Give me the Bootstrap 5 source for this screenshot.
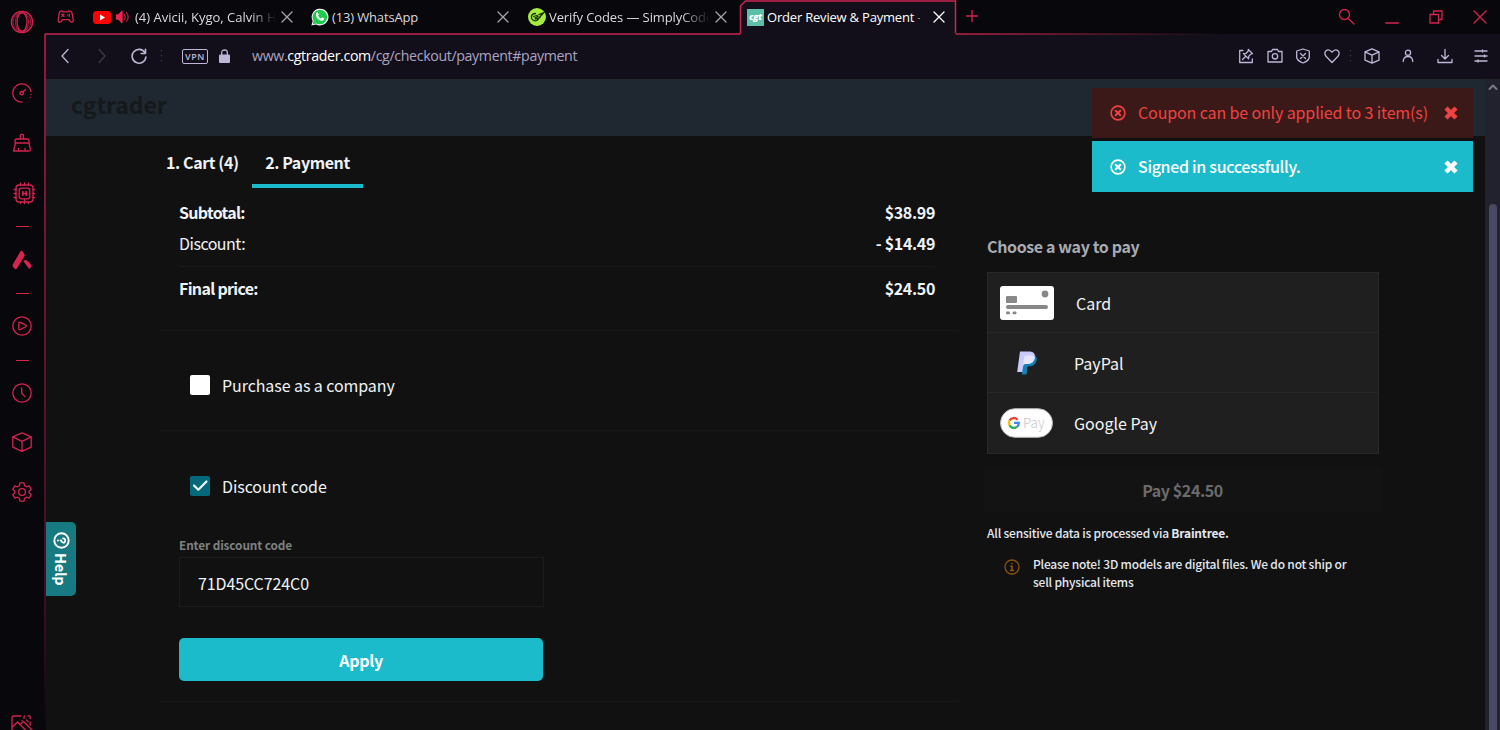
<!DOCTYPE html>
<html lang="en" data-bs-theme="dark">
<head>
<meta charset="utf-8">
<title>Order Review &amp; Payment - CGTrader</title>
<link href="https://cdn.jsdelivr.net/npm/bootstrap@5.3.0/dist/css/bootstrap.min.css" rel="stylesheet">
<style>
  :root { --gx: #d4244f; --teal: #1cbbcb; --lilac: #bdb6d6; }
  body { width: 1500px; height: 730px; background: #111; color: #eef3f6; font-family: "Noto Sans CJK SC", sans-serif; font-size: 16px; line-height: 24px; }
  svg { display: block; flex: none; }
  .ln { fill: none; stroke: currentColor; stroke-width: 1.3; stroke-linecap: round; stroke-linejoin: round; }
  /* browser chrome */
  .chrome-font { font-family: "Open Sans", sans-serif; font-size: 13px; line-height: 18px; }
  .rail { width: 46px; flex: none; background: #07070c; color: var(--gx); }
  .rail > div { width: 44px; display: flex; align-items: center; justify-content: center; flex: none; }
  .h44 { height: 44px; } .h48 { height: 48px; } .h50 { height: 50px; } .h52 { height: 52px; } .h16 { height: 16px; } .h14 { height: 14px; }
  .dash::before { content: ""; width: 13px; height: 1px; background: var(--gx); }
  .tabstrip { height: 34px; flex: none; background: #07070c; color: #d9d9de; }
  .pad-icon { margin: 0 15px 0 8px; color: var(--gx); }
  .tab-item { height: 34px; }
  .tab-label { overflow: hidden; white-space: nowrap; }
  .fade-end { -webkit-mask-image: linear-gradient(90deg, #000 82%, transparent); mask-image: linear-gradient(90deg, #000 82%, transparent); }
  .tab-live { width: 216px; padding-left: 7px; background: #120f1a; color: #fff; }
  .w-a { width: 218px; } .w-b { width: 217px; } .w-c { width: 212px; }
  .w1 { width: 141px; } .w2 { width: 150px; letter-spacing: -.15px; } .w3 { width: 161px; letter-spacing: -.1px; } .w4 { width: 153px; letter-spacing: -.2px; }
  .x-ic { margin-left: 5px; color: #a5a5ad; } .w2 + .x-ic { margin-left: 15px; } .w3 + .x-ic { margin-left: 5px; } .w4 + .x-ic { margin-left: 13px; color: #fff; }
  .winctl { padding: 0 13px 0 9px; color: var(--gx); } .g2 { margin-left: 30px; }
  .cgt { width: 17px; height: 17px; background: #5cbfa8; color: #fff; font: italic 800 9px/15px "Open Sans", sans-serif; text-align: center; flex: none; letter-spacing: -.3px; }
  .addr { height: 44px; flex: none; background: #120f1a; color: var(--lilac); }
  .vpn { width: 26px; height: 15px; border: 1.3px solid var(--lilac); border-radius: 2px; font-size: 9px; line-height: 13px; letter-spacing: .6px; text-align: center; font-weight: 600; }
  .url { font-size: 14.2px; color: #aba4c4; letter-spacing: -.36px; }
  .url b { font-weight: 400; color: #fff; }
  .tools { gap: 12.5px; padding-right: 11px; } .tools .dots { margin-left: -3px; } .tools .dots + svg { margin-left: -1px; } .tools .dots + svg ~ svg { margin-left: 8px; }
  .outline { inset: 0; pointer-events: none; z-index: 5; }
  /* page */
  .site-head { height: 57px; background: #1f2831; }
  .logo-word { font-size: 23px; line-height: 51px; font-weight: 700; color: #15191c; padding-left: 25px; letter-spacing: -.1px; }
  .scroll { width: 15px; background: #22222f; }
  .thumb { width: 8px; height: 526px; background: #474a62; border-radius: 4px 4px 0 0; margin: 125px 0 0 4px; }
  .checkout { width: 800px; margin-left: 113px; }
  .steps { height: 52px; font-weight: 700; letter-spacing: -.4px; }
  .step { height: 52px; line-height: 52px; }
  .s1 { padding-left: 7px; width: 93px; white-space: nowrap; }
  .step-on { border-bottom: 4px solid var(--teal); width: 111px; text-align: center; }
  .rule { height: 1px; background: #181818; }
  .sum { margin: 0 24px 0 20px; }
  .lbl-b { letter-spacing: -.7px; } .lbl-r { letter-spacing: -.5px; } .amt { letter-spacing: -.35px; }
  .tick { width: 20px; height: 20px; border-radius: 2px; background: #fff; }
  .tick-on { background: #04697b; }
  .opt { padding-left: 31px; gap: 12px; letter-spacing: -.08px; }
  .code-label { font-size: 11.8px; line-height: 18px; font-weight: 700; color: #7d8182; letter-spacing: -.1px; }
  .code-box { width: 365px; height: 50px; border: 1px solid #1c1c1c; padding: 0 18px; line-height: 50px; letter-spacing: -.1px; }
  .apply { width: 364px; height: 43px; background: var(--teal); color: #fff; border-radius: 5px; font-weight: 700; letter-spacing: -.3px; }
  .paycol { width: 392px; margin-left: 28px; padding-top: 98px; }
  .pay-title { color: #a7abb3; letter-spacing: -.37px; }
  .ways { border: 1px solid #282828; background: #1f1f1f; height: 182px; }
  .way { height: 60px; border-bottom: 1px solid #272727; color: #f4f4f4; padding-left: 12px; }
  .way:last-child { border: 0; }
  .way .pic { width: 54px; display: flex; justify-content: center; }
  .paybtn { height: 44px; margin: 15px -2px 0 -3px; background: #131313; color: #6b6b6e; line-height: 42px; font-weight: 700; text-align: center; letter-spacing: -.4px; }
  .fine { font-size: 12px; line-height: 18px; font-weight: 500; color: #e2e8f0; white-space: nowrap; letter-spacing: -.2px; }
  .toasts { left: 1092px; top: 88px; width: 381px; z-index: 6; }
  .note { height: 50px; padding: 0 15px 0 18px; }
  .note span { margin: -2px 0 0 12px; letter-spacing: -.13px; }
  .note-bad { background: #3c1919; color: #ee4340; }
  .note-ok { background: var(--teal); color: #fff; height: 51px; margin-top: 3px; }
  .note-ok span { font-weight: 500; letter-spacing: -.32px; }
  .help { left: 46px; top: 522px; width: 30px; height: 74px; background: #177a82; color: #fff; border-radius: 0 5px 5px 0; z-index: 6; writing-mode: vertical-rl; font-weight: 700; font-size: 14.5px; line-height: 30px; padding-top: 10px; letter-spacing: -.2px; }
</style>
</head>
<body class="d-flex overflow-hidden position-relative">

<aside class="rail d-flex flex-column chrome-font">
  <div class="h44"><svg width="24" height="24" viewBox="0 0 24 24" class="ln"><circle cx="12" cy="12" r="10.6"/><circle cx="12" cy="12" r="9" stroke-width=".7"/><ellipse cx="12" cy="12" rx="5" ry="9.3"/><ellipse cx="12" cy="12" rx="6.6" ry="10.2" stroke-width=".7"/></svg></div>
  <div class="h50 mt-4"><svg width="20" height="20" viewBox="0 0 20 20" class="ln"><path d="M10 19.200A9.200 9.200 0 1 1 19 8.600M13.500 6.500L10.800 9"/><circle cx="9.700" cy="10.200" r="1.700"/><path d="M19 11.500v.1M18.300 14.500v.1"/></svg></div>
  <div class="h50"><svg width="20" height="20" viewBox="0 0 20 20" class="ln"><path d="M8.300 6V2.300q0-1 1-1h1.200q1 0 1 1V6M3 10V7.500Q3 6 4.500 6h11Q17 6 17 7.500V10zM3.500 10L1.500 18h15.500q1.400 0 1.400-1.500L17 10M6.500 18v-2.500M13 18v-2.500"/></svg></div>
  <div class="h50 ps-1"><svg width="22" height="22" viewBox="0 0 22 22" class="ln"><rect x="3" y="3" width="17" height="17" rx="3"/><rect x="6.200" y="6.200" width="10.600" height="10.600" rx="2.500"/><path d="M9.800 9.500v4M13.200 9.500v4M9.800 11.500h3.400" stroke-width="1.600"/><path d="M7.500 1v2M11.500 1v2M15.500 1v2M7.500 20v1.500M11.500 17v4.500M15.500 20v1.500M1 7.500h2M1 11.500h2M1 15.500h2M20 7.500h1.500M20 11.500h1.500M20 15.500h1.500"/></svg></div>
  <div class="h16 dash"></div>
  <div class="h52"><svg width="20" height="20" viewBox="0 0 20 20" fill="currentColor"><path d="M8.300 1.500Q9.500-.3 11 1.800l1.400 2.400q.6 1.200-.2 2.300L5 18.500Q3.800 20 2.400 18.500l-1.500-1.800Q.2 15.500.9 14.200zM11.200 11Q14 8.700 16.300 11.500l2.900 3.500q.9 1.400-.5 2.600l-1.500 1.300z"/></svg></div>
  <div class="h14 dash"></div>
  <div class="h52"><svg width="20" height="20" viewBox="0 0 20 20" class="ln"><circle cx="10" cy="10" r="9.200"/><path d="M6.800 7.400q0-1.500 1.500-1l5.300 2.500q1.600.9 0 1.900l-5.300 2.800q-1.500.5-1.500-1z"/></svg></div>
  <div class="h16 dash"></div>
  <div class="h50"><svg width="20" height="20" viewBox="0 0 20 20" class="ln"><circle cx="10" cy="10" r="9.200"/><path d="M9.700 5v5.300l3.300 3.300"/></svg></div>
  <div class="h48"><svg width="20" height="20" viewBox="0 0 20 20" class="ln"><path d="M10 .8l9.200 4v10.400L10 19.400.8 15.200V4.800zM.8 4.800L10 9.300l9.200-4.500M10 9.300v10"/></svg></div>
  <div class="h52"><svg width="20" height="20" viewBox="0 0 20 20" class="ln"><circle cx="10" cy="10" r="3.400"/><path d="M8 .9h4l.6 2.800 1.900 1.100 2.700-.9 2 3.500-2.100 1.900v1.400l2.100 1.900-2 3.500-2.700-.9-1.900 1.100-.6 2.800H8l-.6-2.800-1.900-1.100-2.700.9-2-3.500 2.100-1.900V9.300L.8 7.400l2-3.500 2.700.9 1.900-1.100z"/></svg></div>
  <div class="mt-auto"><svg width="22" height="15" viewBox="0 0 22 15" class="ln"><path d="M1 15V3Q1 1 3 1h7M1.500 12l5-5 8 8M9 9.500l3.500-3 8.500 8.500M13.500 1v.1M17 1h1.500q.7 0 .7 1v1.500M13 3.500v-2M11 5.500h.1M15.500 5l1.500 1.500M19.200 7v3"/></svg></div>
</aside>

<main class="d-flex flex-column flex-grow-1">
  <header class="tabstrip d-flex chrome-font">
    <div class="d-flex align-items-center"><svg class="ln pad-icon" width="24" height="16" viewBox="0 0 24 16"><path d="M7 2.200q1-.7 2 .6h5q1-1.300 2-.6 1.700.3 2 1.800l1.200 6.500q.3 3-1.800 2.700-1.300-.2-2.500-2.600H8.500q-1.200 2.400-2.500 2.600-2.100.4-1.800-2.200L5.200 4q.3-1.500 1.800-1.800zM7.800 5.200l2 2M9.800 5.200l-2 2M13.500 6.200h.1M15.300 5v2.400"/></svg></div>
    <div class="tab-item w-a d-flex align-items-center">
      <svg width="18" height="13" viewBox="0 0 18 13"><rect width="18" height="13" rx="3.500" fill="#f00"/><path d="M7 3.600v5.800l5-2.900z" fill="#fff"/></svg>
      <svg class="ms-1 ln" width="16" height="14" viewBox="0 0 16 14" style="color:#f0264e"><path d="M1.500 5h2l3.500-3.500v11L3.500 9h-2z" fill="currentColor"/><path d="M9.500 4.500q1.800 2.500 0 5M11.500 2.500q3.600 4.500 0 9" stroke-width="1"/></svg>
      <span class="tab-label fade-end w1 ms-1">(4) Avicii, Kygo, Calvin H</span>
      <svg class="ln x-ic" width="12" height="12" viewBox="0 0 12 12"><path d="M1 1l10 10M11 1L1 11"/></svg>
    </div>
    <div class="tab-item w-b d-flex align-items-center">
      <svg width="18" height="18" viewBox="0 0 18 18"><path d="M.4 17.600l1.300-4.500A8.400 8.400 0 1 1 5 16.400z" fill="#fff"/><path d="M1.600 16.400l1-3.500a7.300 7.300 0 1 1 2.600 2.500z" fill="#1fca4f"/><path d="M5.500 4.700q.7-.8 1.500.1l.8 1.700-.7 1.200q1 1.900 3 2.800l1.100-1q.8.200 2 1-.1 2-2 2.300Q9 12.800 7 10.900T5 7.300Q4.600 5.800 5.500 4.700z" fill="#fff"/></svg>
      <span class="tab-label w2" style="margin-left:3px">(13) WhatsApp</span>
      <svg class="ln x-ic" width="12" height="12" viewBox="0 0 12 12"><path d="M1 1l10 10M11 1L1 11"/></svg>
    </div>
    <div class="tab-item w-c d-flex align-items-center">
      <svg width="18" height="18" viewBox="0 0 18 18"><circle cx="9" cy="9" r="9" fill="#a5ec3f"/><path class="ln" style="color:#17300b" d="M7.500 5.500L5 6Q2.500 8 4 11q1.500 2.500 5 1.500l4.500-5.500L16 4.500l-5 2.200M5.500 8.500l3.500-1 1 1-3 1.500 1 1 4-1.500"/></svg>
      <span class="tab-label fade-end w3" style="margin-left:3px">Verify Codes — SimplyCode</span>
      <svg class="ln x-ic" width="12" height="12" viewBox="0 0 12 12"><path d="M1 1l10 10M11 1L1 11"/></svg>
    </div>
    <div class="tab-item tab-live d-flex align-items-center">
      <span class="cgt">cgt</span>
      <span class="tab-label w4" style="margin-left:3px">Order Review &amp; Payment <span class="opacity-50">-</span></span>
      <svg class="ln x-ic" width="12" height="12" viewBox="0 0 12 12"><path d="M1 1l10 10M11 1L1 11"/></svg>
    </div>
    <div class="d-flex align-items-center flex-grow-1 winctl">
      <svg class="ln" width="14" height="14" viewBox="0 0 14 14"><path d="M1.500 6h11M7 .5v11"/></svg>
      <svg class="ln ms-auto" width="17" height="17" viewBox="0 0 17 17"><circle cx="6.500" cy="5.500" r="5"/><path d="M10.300 9.500l5.700 5.500"/></svg>
      <svg class="ln g2" width="14" height="14" viewBox="0 0 14 14"><path d="M.7 13h12.600"/></svg>
      <svg class="ln g2" width="14" height="14" viewBox="0 0 14 14"><path d="M1 4.500h8.500V13H1zM4.500 4.500V1H13v8.500H9.500"/></svg>
      <svg class="ln g2" width="14" height="14" viewBox="0 0 14 14"><path d="M1 1l12 12M13 1L1 13"/></svg>
    </div>
  </header>

  <nav class="addr d-flex align-items-center chrome-font">
    <svg class="ln" style="margin-left:14px" width="10" height="16" viewBox="0 0 10 16"><path d="M8 1.500L2 8l6 6.500"/></svg>
    <svg class="ln opacity-25" style="margin-left:27px" width="10" height="16" viewBox="0 0 10 16"><path d="M2 1.500L8 8l-6 6.500"/></svg>
    <svg class="ln" style="margin-left:24px" width="16" height="16" viewBox="0 0 16 16"><path d="M13.900 4.600A6.900 6.900 0 1 0 14.900 9M14.500 1.200v4.300h-4.300" stroke-width="1.600"/></svg>
    <svg class="opacity-25" style="margin-left:13px" width="3" height="12" viewBox="0 0 3 12" fill="currentColor"><path d="M.8 0h1.300v1.300H.8zM.8 5h1.300v1.300H.8zM.8 10h1.300v1.300H.8z"/></svg>
    <span class="vpn" style="margin-left:19px">VPN</span>
    <svg style="margin-left:11px" width="11" height="15" viewBox="0 0 11 15"><rect y="5.500" width="11" height="8.500" rx="1" fill="#bdb6d6"/><path class="ln" d="M2.700 6V3.500q0-2.500 2.800-2.500t2.800 2.500V6"/></svg>
    <span class="url" style="margin-left:22px">www.<b>cgtrader.com</b>/cg/checkout/payment#payment</span>
    <div class="ms-auto d-flex align-items-center tools">
      <svg class="ln" width="16" height="16" viewBox="0 0 16 16"><path d="M5 2.500H1.700v12h12.600v-3.500M4.500 11.500L7.500 8.500M10.300 1.500l4.200 4.200-1.700.4-2 2-.2 2.700L5.400 5.600l2.700-.3 2-2z"/></svg>
      <svg class="ln" width="16" height="16" viewBox="0 0 16 16"><path d="M1 14V3.500h3.500l1-2h5l1 2H15V14z"/><circle cx="8" cy="8.300" r="2.700"/></svg>
      <svg class="ln" width="16" height="16" viewBox="0 0 16 16"><path d="M8 1l6.300 2v6.500Q13.500 13 8 15 2.500 13 1.700 9.500V3zM5.500 5.500l5 5M10.500 5.500l-5 5"/></svg>
      <svg class="ln" width="16" height="16" viewBox="0 0 16 16"><path d="M8 14.500L2 8.300Q-.3 5 2 2.800 5 .5 8 4.200 11 .5 14 2.800q2.300 2.200 0 5.500z"/></svg>
      <svg class="opacity-25 dots" width="3" height="12" viewBox="0 0 3 12" fill="currentColor"><path d="M.8 0h1.300v1.300H.8zM.8 5h1.300v1.300H.8zM.8 10h1.300v1.300H.8z"/></svg>
      <svg class="ln" width="16" height="16" viewBox="0 0 16 16"><path d="M8 .8l7 3v8.400l-7 3-7-3V3.800zM1 3.800l7 3.400 7-3.400M8 7.200v8"/></svg>
      <svg class="ln" width="16" height="16" viewBox="0 0 16 16"><circle cx="8" cy="4.800" r="2.600"/><path d="M3.200 13.500q.3-5 4.800-5t4.800 5"/></svg>
      <svg class="ln" width="16" height="16" viewBox="0 0 16 16"><path d="M8 1.500v9.500M4.500 7.500L8 11l3.500-3.500M1 11.500v3h14v-3"/></svg>
      <svg class="ln" width="16" height="16" viewBox="0 0 16 16"><path d="M1.500 3h13M1.500 8h13M1.500 13h13M9.500 1.500v3M11.500 6.500v3M5 11.500v3" stroke-linecap="butt"/></svg>
    </div>
  </nav>

  <div class="d-flex flex-grow-1" style="margin-top:1px">
    <section class="flex-grow-1">
      <div class="site-head"><div class="logo-word">cgtrader</div></div>
      <div class="d-flex">
        <div class="checkout">
          <div class="steps d-flex">
            <div class="step s1">1. Cart (4)</div>
            <div class="step step-on">2. Payment</div>
          </div>
          <div class="sum">
            <div class="d-flex justify-content-between fw-bold" style="margin-top:12px"><span class="lbl-b">Subtotal:</span><span class="amt">$38.99</span></div>
            <div class="d-flex justify-content-between" style="margin-top:7px"><span class="lbl-r">Discount:</span><b class="amt">- $14.49</b></div>
            <div class="rule" style="margin-top:11px"></div>
            <div class="d-flex justify-content-between fw-bold" style="margin-top:9px"><span class="lbl-b">Final price:</span><span class="amt">$24.50</span></div>
          </div>
          <div class="rule" style="margin-top:30px"></div>
          <div class="opt d-flex align-items-center" style="margin-top:42px"><span class="tick"></span><span>Purchase as a company</span></div>
          <div class="rule" style="margin-top:33px"></div>
          <div class="opt d-flex align-items-center" style="margin-top:43px"><span class="tick tick-on"><svg class="ln" width="20" height="20" viewBox="0 0 20 20"><path d="M4 9.500l4.300 4.300L16.500 5.500" stroke-width="2.200"/></svg></span><span>Discount code</span></div>
          <div class="sum">
            <div class="code-label" style="margin-top:38px">Enter discount code</div>
            <div class="code-box" style="margin-top:3px">71D45CC724C0</div>
            <button class="btn apply p-0 d-block" style="margin-top:31px">Apply</button>
          </div>
          <div class="rule" style="margin-top:20px"></div>
        </div>
        <div class="paycol">
          <div class="fw-bold pay-title">Choose a way to pay</div>
          <div class="ways" style="margin-top:14px">
            <div class="way d-flex align-items-center"><span class="pic"><svg width="54" height="34" viewBox="0 0 54 34"><rect width="54" height="34" rx="3" fill="#fff"/><g fill="#888"><rect x="6" y="10" width="11" height="7" rx="1"/><circle cx="45" cy="8" r="3.400"/><rect x="6" y="19" width="42" height="4" rx="2"/><rect x="6" y="25.500" width="4" height="2.700" rx="1"/><rect x="12.500" y="25.500" width="4" height="2.700" rx="1"/></g></svg></span><span style="margin-left:22px">Card</span></div>
            <div class="way d-flex align-items-center"><span class="pic"><svg width="20" height="24" viewBox="0 0 20 24"><path d="M3 .5h10q5.500.5 5 6-1 6-7 6.500H8L6.300 21H.2z" fill="#c9cbfb"/><path d="M18 4q3 3 1 7-2 4.500-7 4.300l-1.500.2-1 8H4.800l1.500-9L8 13h4q5-1 6-9z" fill="#1580b2"/><path d="M7.500 4.500h7q3 .5 3.500 2-1 6-7 6.500H6.200z" fill="#e4e5ff"/></svg></span><span style="margin-left:20px">PayPal</span></div>
            <div class="way d-flex align-items-center"><span class="pic"><svg width="54" height="30" viewBox="0 0 54 30"><rect x=".5" y=".7" width="52" height="28.600" rx="14.300" fill="#fff" stroke="#bbb"/><g fill="none" stroke-width="2.300"><path d="M17.600 11.700A5 5 0 0 0 9.600 12.400" stroke="#ea4335"/><path d="M9.600 12.400a5 5 0 0 0 0 5" stroke="#fbbc04"/><path d="M9.600 17.400a5 5 0 0 0 7.300 1.500" stroke="#34a853"/><path d="M16.900 18.900q1.900-1.500 1.900-4H14" stroke="#4285f4"/></g><text x="23" y="20" font-size="13.500" fill="#c8c8c8" font-family="Noto Sans CJK SC,sans-serif" font-weight="300">Pay</text></svg></span><span style="margin-left:20px">Google Pay</span></div>
          </div>
          <div class="paybtn">Pay $24.50</div>
          <div class="fine" style="margin-top:11px">All sensitive data is processed via <b>Braintree.</b></div>
          <div class="d-flex" style="margin-top:13px;padding-left:17px">
            <svg class="ln" style="color:#8a5312;margin-top:4px" width="16" height="16" viewBox="0 0 16 16"><circle cx="8" cy="8" r="7"/><path d="M6.800 7.300H8v4M6.500 11.500h3M8 4.500v.2" stroke-width="1.600"/></svg>
            <div class="fine" style="margin-left:13px">Please note! 3D models are digital files. We do not ship or<br>sell physical items</div>
          </div>
        </div>
      </div>
    </section>
    <div class="scroll"><svg class="ln position-absolute" style="color:#77798a;margin:4px 0 0 3px" width="10" height="8" viewBox="0 0 10 8"><path d="M1.500 6L5 2.500 8.500 6" stroke-width="2"/></svg><div class="thumb"></div></div>
  </div>
</main>

<svg class="outline position-absolute" width="1500" height="730" fill="none" stroke-width="1.500">
  <defs>
    <linearGradient id="gv" gradientUnits="userSpaceOnUse" x1="0" y1="34" x2="0" y2="730"><stop offset="0" stop-color="#c02349"/><stop offset=".35" stop-color="#8e1b3c"/><stop offset=".85" stop-color="#4a0f25"/><stop offset="1" stop-color="#4a0f25" stop-opacity="0"/></linearGradient>
    <linearGradient id="gh" gradientUnits="userSpaceOnUse" x1="956" y1="0" x2="1220" y2="0"><stop offset="0" stop-color="#c02349"/><stop offset="1" stop-color="#c02349" stop-opacity="0"/></linearGradient>
  </defs>
  <path d="M45 34V730" stroke="url(#gv)"/>
  <path d="M45 34H739.500L740.500 33V6L745.500 1H955.500V33" stroke="#c82550"/>
  <path d="M955.500 33.900L1220 34.100" stroke="url(#gh)"/>
</svg>

<div class="toasts position-absolute">
  <div class="note note-bad d-flex align-items-center"><svg class="ln" width="16" height="16" viewBox="0 0 16 16"><circle cx="8" cy="8" r="6.900" stroke-width="1.600"/><path d="M5.700 5.700l4.600 4.600M10.300 5.700l-4.600 4.600" stroke-width="2"/></svg><span>Coupon can be only applied to 3 item(s)</span><svg class="ms-auto" width="14" height="14" viewBox="0 0 14 14" stroke="currentColor" stroke-width="4.500"><path d="M2 2l10 10M12 2L2 12"/></svg></div>
  <div class="note note-ok d-flex align-items-center"><svg class="ln" width="16" height="16" viewBox="0 0 16 16"><circle cx="8" cy="8" r="6.900" stroke-width="1.600"/><path d="M5.700 5.700l4.600 4.600M10.300 5.700l-4.600 4.600" stroke-width="2"/></svg><span>Signed in successfully.</span><svg class="ms-auto" width="14" height="14" viewBox="0 0 14 14" stroke="currentColor" stroke-width="4.500"><path d="M2 2l10 10M12 2L2 12"/></svg></div>
</div>

<div class="help position-absolute d-flex align-items-center"><svg style="margin-bottom:4px" width="17" height="17" viewBox="0 0 17 17"><g transform="rotate(90 8.500 8.500)" class="ln"><circle cx="8.500" cy="8.500" r="7.200" stroke-width="1.900"/><path d="M6.300 7q0-2.200 2.200-2.200T10.700 6.700Q10.700 8 8.500 8.700v.8M8.500 12v.1" stroke-width="1.800"/></g></svg><span>Help</span></div>

<script src="https://cdn.jsdelivr.net/npm/bootstrap@5.3.0/dist/js/bootstrap.bundle.min.js"></script>
</body>
</html>
